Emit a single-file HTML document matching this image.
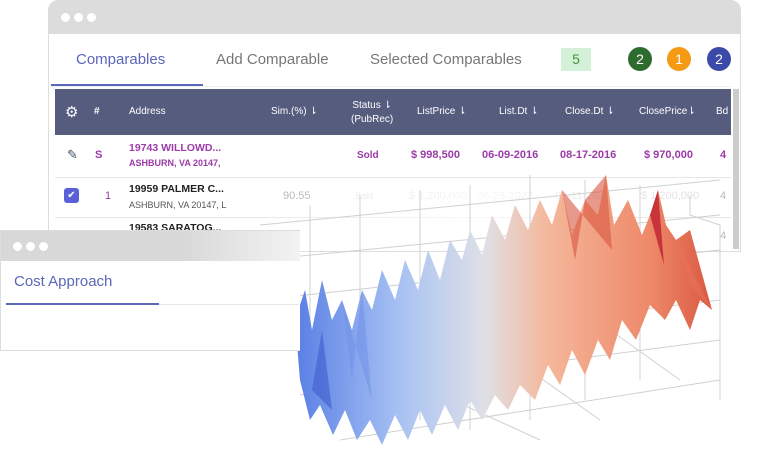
<!DOCTYPE html>
<html><head><meta charset="utf-8"><style>
*{margin:0;padding:0;box-sizing:border-box}
body{width:768px;height:469px;background:#fff;position:relative;overflow:hidden;font-family:"Liberation Sans",sans-serif}
.win{position:absolute;left:48px;top:0;width:693px;height:252px;border:1px solid #ddd;border-radius:10px 10px 0 0;background:#fff;overflow:hidden}
.tb{height:33px;background:#dcdcdc;position:relative}
.dot{position:absolute;top:12px;width:9px;height:9px;border-radius:50%;background:#fff}
.tab{position:absolute;top:50px;font-size:15px;color:#777}
.badge{position:absolute;width:24px;height:24px;border-radius:50%;color:#fff;font-size:14px;text-align:center;line-height:24px;top:46px}
.hdr{position:absolute;left:6px;top:88px;width:676px;height:46px;background:#555c7d;color:#fff;font-size:10px}
.hdr span{position:absolute}
.row{position:absolute;left:6px;width:676px;border-bottom:1px solid #e6e6e6;font-size:11px}
.row span{position:absolute}
.p{color:#9c3aa8;font-weight:bold}
.cost{position:absolute;left:0;top:230px;width:300px;height:121px;border:1px solid #ddd;border-right:none;background:#fff}
</style></head><body>
<div class="win">
<div class="tb"><div class="dot" style="left:12px"></div><div class="dot" style="left:25px"></div><div class="dot" style="left:38px"></div></div>
<div class="tab" style="left:27px;color:#5b67b8">Comparables</div>
<div style="position:absolute;left:2px;top:83px;width:152px;height:2px;background:#5b67b8"></div>
<div style="position:absolute;left:2px;top:85px;width:680px;height:1px;background:#eee"></div>
<div class="tab" style="left:167px">Add Comparable</div>
<div class="tab" style="left:321px">Selected Comparables</div>
<div style="position:absolute;left:512px;top:47px;width:30px;height:23px;background:#d4f0d6;color:#3a9a3a;font-size:14px;text-align:center;line-height:23px">5</div>
<div class="badge" style="left:579px;background:#2e6b2e">2</div>
<div class="badge" style="left:618px;background:#f59a12">1</div>
<div class="badge" style="left:658px;background:#3b4aa8">2</div>
<div style="position:absolute;left:684px;top:88px;width:6px;height:160px;background:#ccc"></div>
<div class="hdr">
<span style="left:10px;top:14px;font-size:15px">⚙</span>
<span style="left:39px;top:17px;font-weight:bold">#</span>
<span style="left:74px;top:17px">Address</span>
<span style="left:216px;top:17px">Sim.(%) ⇂</span>
<span style="left:296px;top:10px;text-align:center;line-height:14px">Status ⇂<br>(PubRec)</span>
<span style="left:362px;top:17px">ListPrice ⇂</span>
<span style="left:444px;top:17px">List.Dt ⇂</span>
<span style="left:510px;top:17px">Close.Dt ⇂</span>
<span style="left:584px;top:17px">ClosePrice⇂</span>
<span style="left:661px;top:17px">Bd</span>
</div>
<div class="row" style="top:134px;height:43px">
<span style="left:12px;top:12px;color:#456;font-size:13px">✎</span>
<span class="p" style="left:40px;top:14px">S</span>
<span class="p" style="left:74px;top:7px;font-size:10.5px">19743 WILLOWD...</span>
<span class="p" style="left:74px;top:23px;font-size:9px">ASHBURN, VA 20147,</span>
<span class="p" style="left:302px;top:15px;font-size:10px">Sold</span>
<span class="p" style="left:356px;top:14px">$ 998,500</span>
<span class="p" style="left:427px;top:14px">06-09-2016</span>
<span class="p" style="left:505px;top:14px">08-17-2016</span>
<span class="p" style="left:589px;top:14px">$ 970,000</span>
<span class="p" style="left:665px;top:14px">4</span>
</div>
<div class="row" style="top:177px;height:40px">
<span style="left:9px;top:10px;width:15px;height:15px;background:#5a60d8;border-radius:3px;color:#fff;font-size:10px;text-align:center;line-height:15px">✔</span>
<span style="left:50px;top:12px;color:#9c3aa8">1</span>
<span style="left:74px;top:5px;font-weight:bold;color:#222;font-size:10.5px">19959 PALMER C...</span>
<span style="left:74px;top:22px;color:#555;font-size:9px">ASHBURN, VA 20147, L</span>
<span style="left:228px;top:12px;color:#aaa">90.55</span>
<span style="left:300px;top:13px;color:#ddd;font-size:9px">Sold</span>
<span style="left:354px;top:12px;color:#ddd">$ 1,200,000</span>
<span style="left:422px;top:12px;color:#ddd">06-23-2022</span>
<span style="left:500px;top:12px;color:#ddd">08-11-2022</span>
<span style="left:586px;top:12px;color:#ddd">$ 1,200,000</span>
<span style="left:665px;top:12px;color:#bbb">4</span>
</div>
<div class="row" style="top:217px;height:35px;border:none">
<span style="left:74px;top:4px;font-weight:bold;color:#222;font-size:10.5px">19583 SARATOG...</span>
<span style="left:665px;top:12px;color:#bbb">4</span>
</div>
</div>
<svg style="position:absolute;left:0;top:0" width="768" height="469">
<defs>
<linearGradient id="g" x1="300" y1="0" x2="710" y2="0" gradientUnits="userSpaceOnUse">
<stop offset="0" stop-color="#5d82e6"/><stop offset="0.25" stop-color="#a9c3f3"/><stop offset="0.45" stop-color="#dfe0e6"/><stop offset="0.6" stop-color="#f5b89c"/><stop offset="0.85" stop-color="#ee8a6a"/><stop offset="1" stop-color="#db5a42"/></linearGradient>
<radialGradient id="f" cx="480" cy="200" r="250" gradientUnits="userSpaceOnUse"><stop offset="0" stop-color="#fff" stop-opacity="0.75"/><stop offset="1" stop-color="#fff" stop-opacity="0"/></radialGradient>
</defs>
<rect x="260" y="180" width="470" height="70" fill="url(#f)"/>
<g stroke="#d0d0d0" stroke-width="1" fill="none">
<path d="M310 205 L310 360 M360 195 L360 350 M420 190 L420 420 M470 185 L470 430 M530 175 L530 420 M585 180 L585 400 M640 185 L640 380 M690 195 L690 215 L720 225 L720 400"/>
<path d="M260 225 L720 180 M260 260 L720 215 M260 300 L720 250 M300 350 L720 300 M300 395 L720 340 M340 440 L720 380"/>
<path d="M300 330 L540 440 M430 300 L600 420 M540 280 L680 380"/>
</g>
<polygon fill="url(#g)" points="295,320 305,290 312,330 322,280 332,320 342,300 352,330 362,290 372,310 382,270 395,300 405,260 418,290 428,250 440,280 450,240 462,260 470,230 482,255 492,215 505,240 515,205 528,230 540,200 552,225 562,190 572,235 585,200 598,215 606,175 614,225 628,200 642,235 650,215 658,190 666,225 676,240 690,230 712,310 700,300 690,330 676,300 665,320 650,305 636,340 622,320 610,360 598,340 585,375 572,350 560,385 548,365 535,400 520,385 508,410 495,395 482,420 470,400 458,430 445,405 432,435 420,410 408,440 395,415 382,445 370,420 357,440 345,410 333,435 320,405 310,420 300,380"/>
<polygon fill="#3f5ccc" opacity=".6" points="312,390 322,330 332,410"/>
<polygon fill="#6d8fe8" opacity=".5" points="342,300 352,380 362,290 372,400"/>
<polygon fill="#b8132a" opacity=".7" points="650,215 658,190 664,265"/>
<polygon fill="#d9553d" opacity=".6" points="562,190 575,260 585,200 606,175 612,250"/>
<polygon fill="#e8735a" opacity=".5" points="676,240 712,310 690,285"/>
</svg>
<div class="cost">
<div style="height:30px;background:linear-gradient(90deg,#d8d8d8 60%,rgba(216,216,216,0.3))"><div class="dot" style="left:12px;top:11px"></div><div class="dot" style="left:25px;top:11px"></div><div class="dot" style="left:38px;top:11px"></div></div>
<div style="position:absolute;left:13px;top:42px;font-size:15px;color:#5b67b8">Cost Approach</div>
<div style="position:absolute;left:5px;top:72px;width:153px;height:2px;background:#5b67b8"></div>
<div style="position:absolute;left:158px;top:73px;width:140px;height:1px;background:#e6e6e6"></div>
</div>
</body></html>
